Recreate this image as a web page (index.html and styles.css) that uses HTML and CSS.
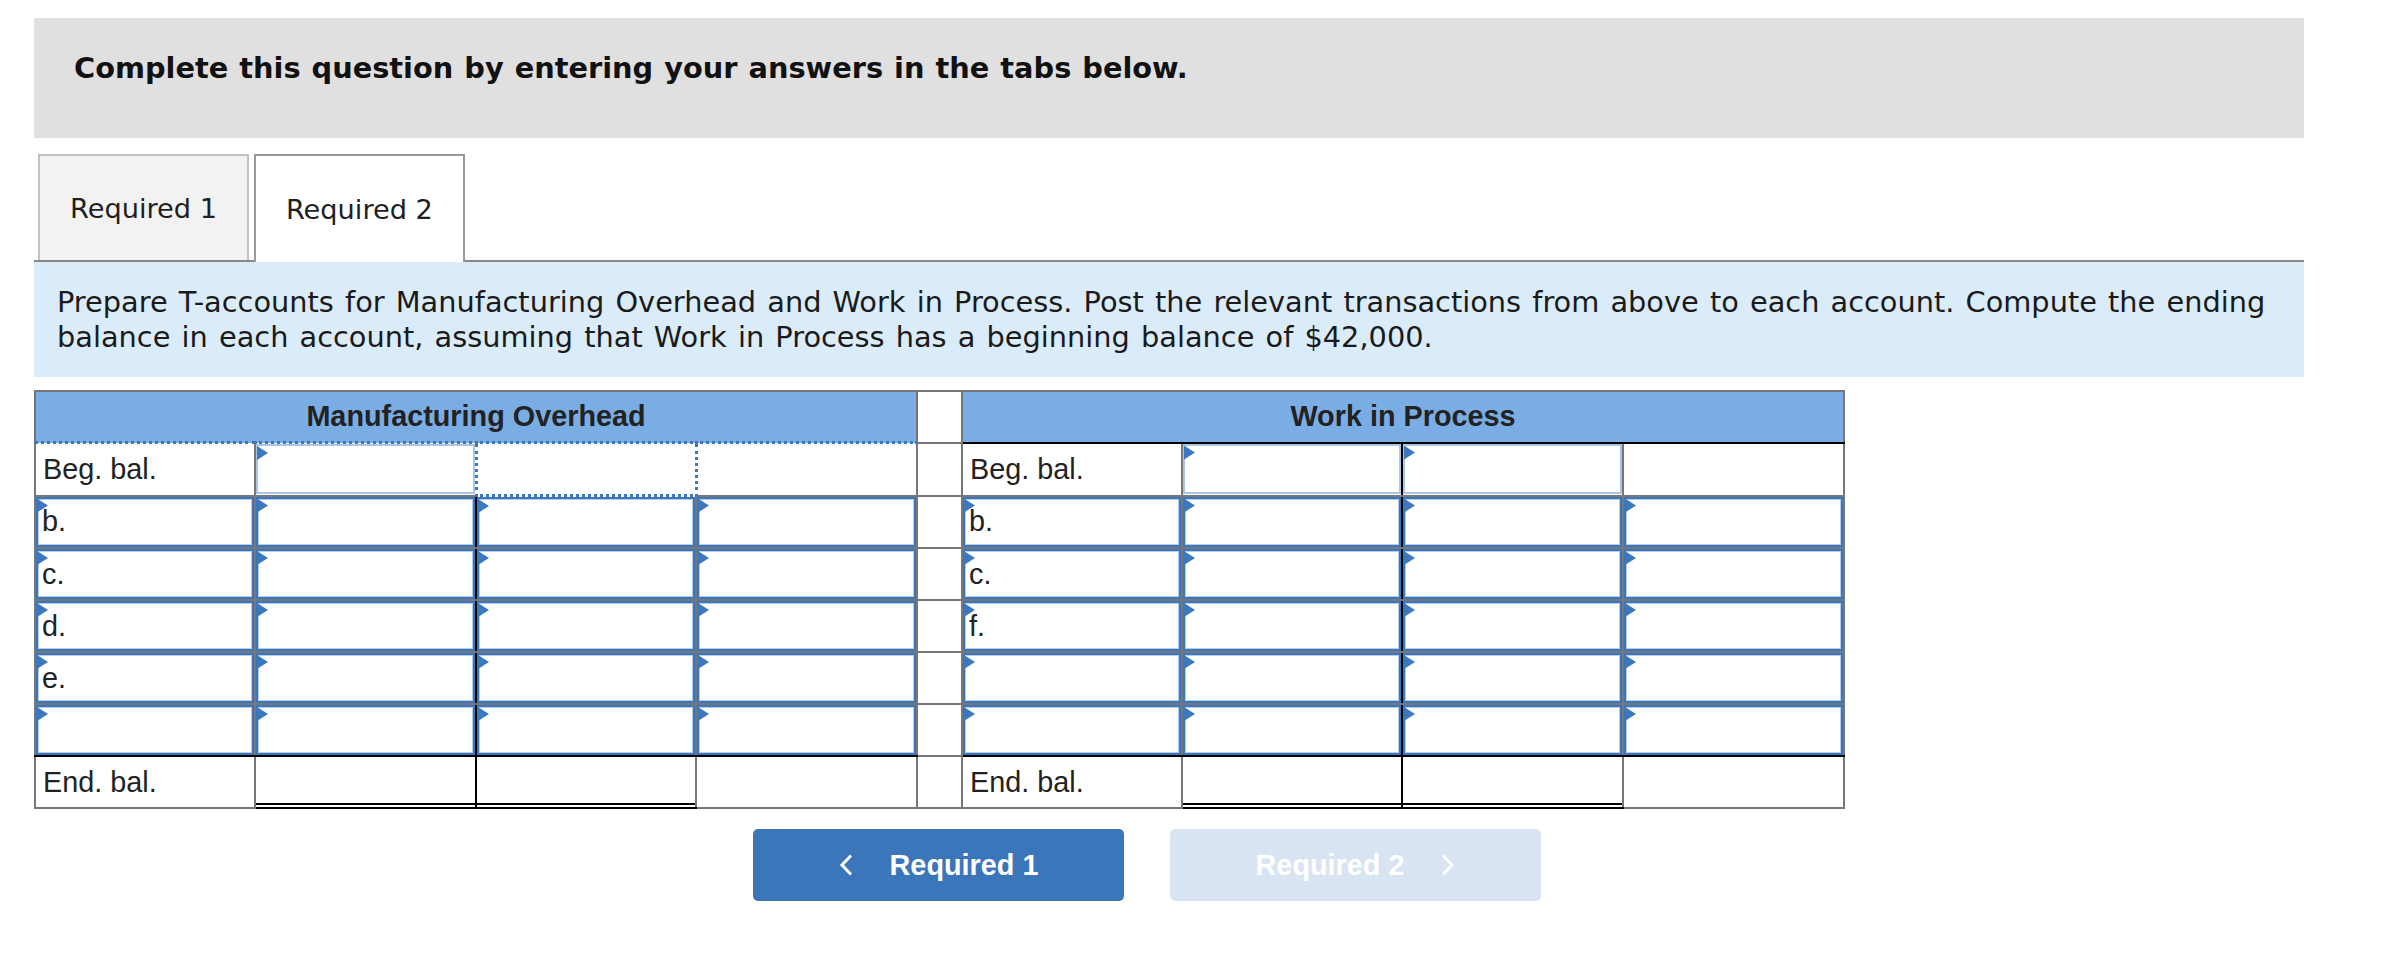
FILE: index.html
```html
<!DOCTYPE html>
<html lang="en">
<head>
    <meta charset="UTF-8">
    <title>Required 2</title>
    <link rel="stylesheet" href="styles.css">
</head>
<body>
<div class="page">
    <div class="notice">Complete this question by entering your answers in the tabs below.</div>

    <div class="tabs">
        <span class="tab">Required 1</span>
        <span class="tab on">Required 2</span>
    </div>

    <div class="prompt">Prepare T-accounts for Manufacturing Overhead and Work in Process. Post the relevant transactions from above to each account. Compute the ending<br>balance in each account, assuming that Work in Process has a beginning balance of $42,000.</div>

    <table class="taccts">
        <colgroup>
            <col style="width: 220px">
            <col style="width: 221px">
            <col style="width: 220px">
            <col style="width: 221px">
            <col style="width: 45px">
            <col style="width: 220px">
            <col style="width: 220px">
            <col style="width: 221px">
            <col style="width: 221px">
        </colgroup>
        <tr>
            <th colspan="4" class="moh">Manufacturing Overhead</th>
            <th class="gap"></th>
            <th colspan="4" class="wip">Work in Process</th>
        </tr>
        <tr>
            <td class="lbl">Beg. bal.</td>
            <td class="f light"><input type="text"></td>
            <td class="focus"></td>
            <td></td>
            <td class="gap"></td>
            <td class="lbl">Beg. bal.</td>
            <td class="f light"><input type="text"></td>
            <td class="f light"><input type="text"></td>
            <td></td>
        </tr>
        <tr>
            <td class="f"><input type="text" value="b."></td>
            <td class="f"><input type="text"></td>
            <td class="f"><input type="text"></td>
            <td class="f"><input type="text"></td>
            <td class="gap"></td>
            <td class="f"><input type="text" value="b."></td>
            <td class="f"><input type="text"></td>
            <td class="f"><input type="text"></td>
            <td class="f"><input type="text"></td>
        </tr>
        <tr>
            <td class="f"><input type="text" value="c."></td>
            <td class="f"><input type="text"></td>
            <td class="f"><input type="text"></td>
            <td class="f"><input type="text"></td>
            <td class="gap"></td>
            <td class="f"><input type="text" value="c."></td>
            <td class="f"><input type="text"></td>
            <td class="f"><input type="text"></td>
            <td class="f"><input type="text"></td>
        </tr>
        <tr>
            <td class="f"><input type="text" value="d."></td>
            <td class="f"><input type="text"></td>
            <td class="f"><input type="text"></td>
            <td class="f"><input type="text"></td>
            <td class="gap"></td>
            <td class="f"><input type="text" value="f."></td>
            <td class="f"><input type="text"></td>
            <td class="f"><input type="text"></td>
            <td class="f"><input type="text"></td>
        </tr>
        <tr>
            <td class="f"><input type="text" value="e."></td>
            <td class="f"><input type="text"></td>
            <td class="f"><input type="text"></td>
            <td class="f"><input type="text"></td>
            <td class="gap"></td>
            <td class="f"><input type="text"></td>
            <td class="f"><input type="text"></td>
            <td class="f"><input type="text"></td>
            <td class="f"><input type="text"></td>
        </tr>
        <tr class="last">
            <td class="f"><input type="text"></td>
            <td class="f"><input type="text"></td>
            <td class="f"><input type="text"></td>
            <td class="f"><input type="text"></td>
            <td class="gap"></td>
            <td class="f"><input type="text"></td>
            <td class="f"><input type="text"></td>
            <td class="f"><input type="text"></td>
            <td class="f"><input type="text"></td>
        </tr>
        <tr>
            <td class="lbl">End. bal.</td>
            <td class="tot"></td>
            <td class="tot"></td>
            <td></td>
            <td class="gap"></td>
            <td class="lbl">End. bal.</td>
            <td class="tot"></td>
            <td class="tot"></td>
            <td></td>
        </tr>
    </table>

    <div class="nav">
        <button class="btn prev">
            <svg width="14" height="22" viewBox="0 0 14 22"><polyline points="12,1.5 3,11 12,20.5"/></svg>
            <span>Required 1</span>
        </button>
        <button class="btn next" disabled>
            <span>Required 2</span>
            <svg width="14" height="22" viewBox="0 0 14 22"><polyline points="2,1.5 11,11 2,20.5"/></svg>
        </button>
    </div>
</div>
</body>
</html>
```

FILE: styles.css
```css
* {
    margin: 0;
    padding: 0;
}
body {
    background: #fff;
    font-family: "DejaVu Sans", Verdana, sans-serif;
    color: #1a1a1a;
}
.page {
    width: 2270px;
    padding: 18px 0 40px 34px;
}

.notice {
    height: 120px;
    box-sizing: border-box;
    padding: 33px 0 0 40px;
    background-color: #e0e0e0;
    font-size: 28.8px;
    font-weight: bold;
    line-height: 34px;
    word-spacing: 1px;
    color: #111;
}

.tabs {
    display: flex;
    gap: 5px;
    margin-top: 16px;
    padding-left: 4px;
    border-bottom: 2px solid #888;
}
.tabs .tab {
    display: flex;
    align-items: center;
    height: 106px;
    box-sizing: border-box;
    padding: 0 30px;
    border: 2px solid #c2c2c2;
    border-bottom: none;
    background-color: #f2f2f2;
    font-size: 27.2px;
    color: #1f1f1f;
}
.tabs .tab.on {
    height: 108px;
    margin-bottom: -2px;
    border-color: #999;
    background-color: #fff;
}

.prompt {
    height: 115px;
    box-sizing: border-box;
    padding: 23px 23px 0;
    background-color: #daebf9;
    font-size: 28.8px;
    line-height: 35px;
    word-spacing: 2px;
    color: #1a1a1a;
}

.taccts {
    margin-top: 13px;
    border-collapse: collapse;
    table-layout: fixed;
    font-family: "Liberation Sans", Arial, sans-serif;
    font-size: 28.8px;
    color: #222;
}
.taccts th,
.taccts td {
    border: 2px solid #777;
    padding: 0;
}
.taccts th {
    height: 49px;
    background-color: #7aade4;
    font-weight: bold;
    text-align: center;
}
.taccts th.gap {
    background-color: #fff;
}
.taccts th.moh {
    border-bottom: 3px dotted #3b78c0;
}
.taccts th.wip {
    border-bottom-color: #000;
}
.taccts td {
    height: 50px;
    background-color: #fff;
}
.taccts td:nth-child(2),
.taccts td:nth-child(7) {
    border-right-color: #000;
}
.taccts tr.last td {
    border-bottom-color: #000;
}
.taccts tr.last td.gap {
    border-bottom-color: #777;
}
.taccts td.lbl {
    padding-left: 7px;
}
.taccts td.focus {
    border: 3px dotted #3b78c0;
}
.taccts td.tot {
    box-shadow: inset 0 -2px 0 #fff, inset 0 -4px 0 #000;
    border-bottom-color: #000;
}

.taccts td.f {
    position: relative;
}
.taccts td.f::before {
    content: "";
    position: absolute;
    left: 1px;
    top: 2px;
    width: 11px;
    height: 14px;
    background-color: #3b78c0;
    clip-path: polygon(0 0, 100% 50%, 0 100%);
}
.taccts td.f input {
    display: block;
    width: 100%;
    height: 50px;
    box-sizing: border-box;
    padding: 0 4px;
    border: 2px solid #3c77bb;
    box-shadow: inset 0 0 0 1px #b5cdea;
    background: #fff;
    outline: none;
    font-family: "Liberation Sans", Arial, sans-serif;
    font-size: 28.8px;
    color: #222;
}
.taccts td.f.light input {
    border-color: #aac5e6;
    box-shadow: none;
}

.nav {
    display: flex;
    gap: 46px;
    margin-top: 20px;
    padding-left: 719px;
}
.btn {
    display: flex;
    align-items: center;
    justify-content: center;
    gap: 37px;
    width: 371px;
    height: 72px;
    border: none;
    border-radius: 5px;
    background-color: #3b76bb;
    color: #fff;
    font-family: "Liberation Sans", Arial, sans-serif;
    font-size: 28.8px;
    font-weight: bold;
}
.btn svg polyline {
    fill: none;
    stroke: #fff;
    stroke-width: 3;
}
.btn.next {
    background-color: #d8e4f2;
}
```
